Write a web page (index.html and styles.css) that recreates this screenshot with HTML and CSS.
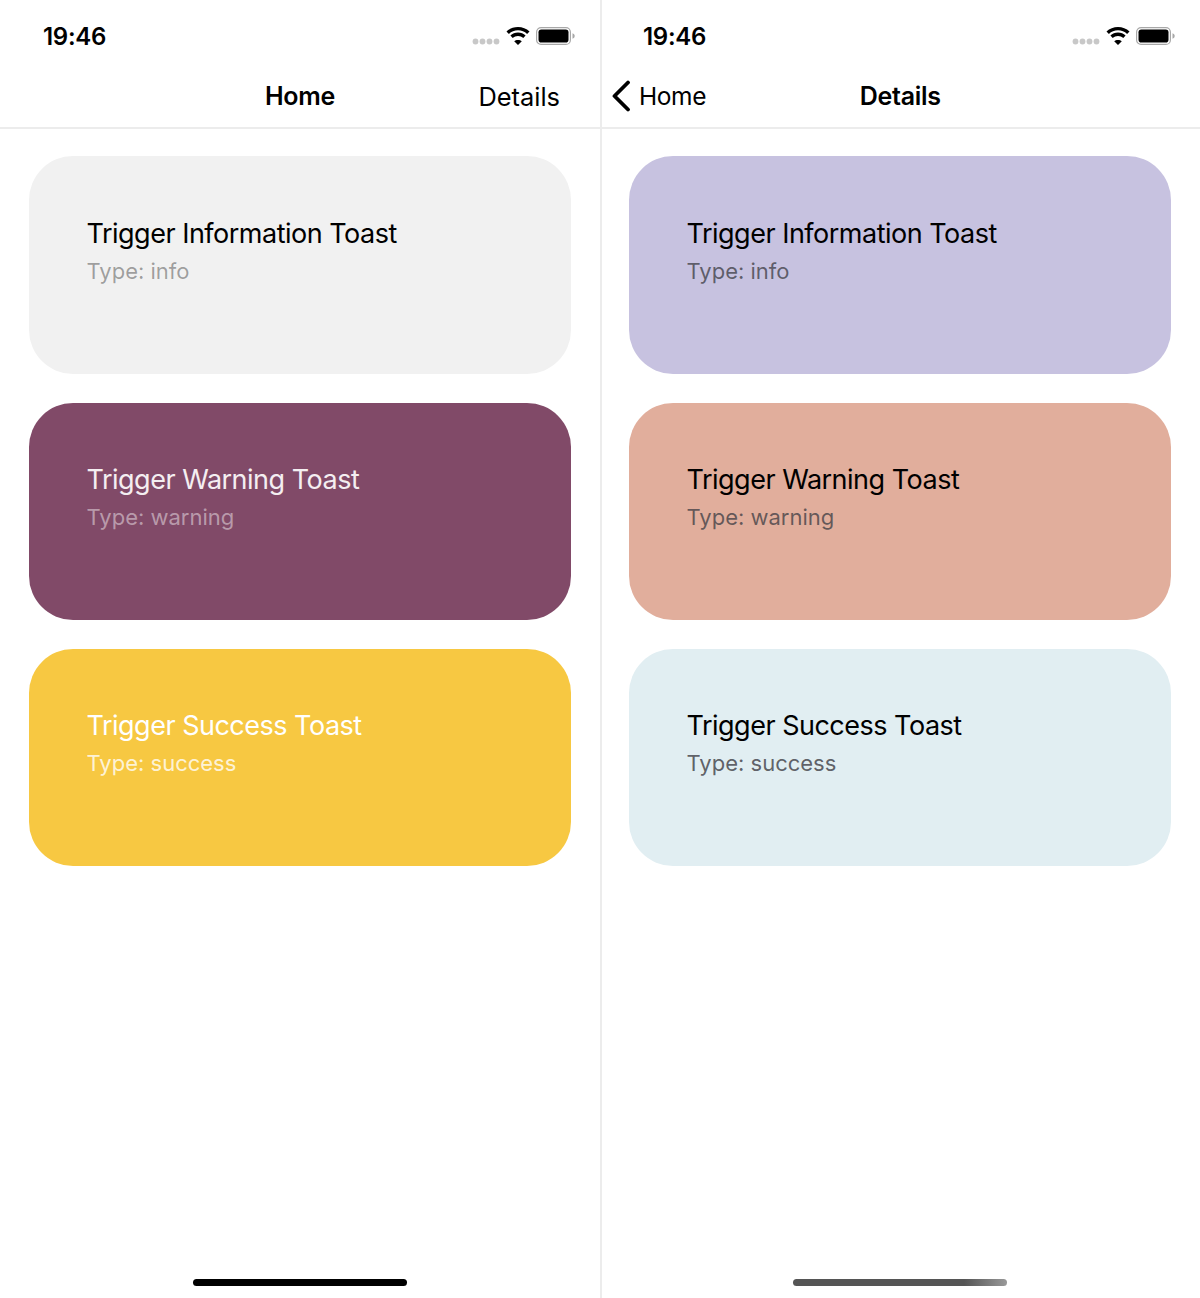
FILE: index.html
```html
<!DOCTYPE html>
<html lang="en">
<head>
<meta charset="utf-8">
<title>Toast demo</title>
<link rel="stylesheet" href="styles.css">
</head>
<body>
<div class="screens">
  <section class="screen">
    <div class="status">
      <span class="time">19:46</span>
      <div class="status-icons">
        <svg class="signal" width="28" height="7" viewBox="0 0 28 7"><g fill="#c8c8c8"><circle cx="3.5" cy="3.5" r="2.9"/><circle cx="10.5" cy="3.5" r="2.9"/><circle cx="17.5" cy="3.5" r="2.9"/><circle cx="24.5" cy="3.500" r="2.9"/></g></svg>
        <svg class="wifi" width="24" height="18" viewBox="0 0 24 18"><path d="M12 3.300c3.500 0 6.700 1.400 9.100 3.600L23.500 4.400C20.500 1.700 16.400 0 12 0S3.500 1.700.5 4.400l2.400 2.500C5.300 4.700 8.500 3.300 12 3.300zM12 8.900c2 0 3.900.8 5.300 2l2.300-2.400C17.600 6.600 14.900 5.500 12 5.500S6.400 6.600 4.400 8.500l2.300 2.400C8.100 9.700 10 8.900 12 8.900zM12 12.900c-1.500 0-2.800.5-3.800 1.400L12 18l3.800-3.700c-1-.9-2.300-1.400-3.800-1.400z" fill="#000"/></svg>
        <svg class="battery" width="39" height="18" viewBox="0 0 39 18"><rect x=".6" y=".6" width="33.800" height="16.800" rx="4.500" fill="none" stroke="#a8a8a8" stroke-width="1.200"/><rect x="2.500" y="2.500" width="30" height="13" rx="2.800" fill="#000"/><path d="M36.500 6.200c1.300.4 2.200 1.500 2.200 2.800s-.9 2.400-2.200 2.800z" fill="#a8a8a8"/></svg>
      </div>
    </div>
    <nav class="nav">
      <span class="nav-title">Home</span>
      <span class="nav-action">Details</span>
    </nav>
    <div class="cards">
      <div class="card card-grey"><div class="card-title">Trigger Information Toast</div><div class="card-type">Type: info</div></div>
      <div class="card card-plum"><div class="card-title">Trigger Warning Toast</div><div class="card-type">Type: warning</div></div>
      <div class="card card-yellow"><div class="card-title">Trigger Success Toast</div><div class="card-type">Type: success</div></div>
    </div>
    <div class="home-bar"></div>
  </section>
  <section class="screen screen-details">
    <div class="status">
      <span class="time">19:46</span>
      <div class="status-icons">
        <svg class="signal" width="28" height="7" viewBox="0 0 28 7"><g fill="#c8c8c8"><circle cx="3.5" cy="3.5" r="2.9"/><circle cx="10.5" cy="3.5" r="2.9"/><circle cx="17.5" cy="3.5" r="2.9"/><circle cx="24.5" cy="3.500" r="2.9"/></g></svg>
        <svg class="wifi" width="24" height="18" viewBox="0 0 24 18"><path d="M12 3.300c3.500 0 6.700 1.400 9.100 3.600L23.500 4.400C20.500 1.700 16.400 0 12 0S3.500 1.700.5 4.400l2.400 2.500C5.300 4.700 8.500 3.300 12 3.300zM12 8.900c2 0 3.900.8 5.300 2l2.300-2.400C17.600 6.600 14.900 5.500 12 5.500S6.400 6.600 4.400 8.500l2.300 2.400C8.100 9.700 10 8.900 12 8.900zM12 12.900c-1.500 0-2.800.5-3.800 1.400L12 18l3.800-3.700c-1-.9-2.300-1.400-3.800-1.400z" fill="#000"/></svg>
        <svg class="battery" width="39" height="18" viewBox="0 0 39 18"><rect x=".6" y=".6" width="33.800" height="16.800" rx="4.500" fill="none" stroke="#a8a8a8" stroke-width="1.200"/><rect x="2.500" y="2.500" width="30" height="13" rx="2.800" fill="#000"/><path d="M36.500 6.200c1.300.4 2.200 1.500 2.200 2.800s-.9 2.400-2.200 2.800z" fill="#a8a8a8"/></svg>
      </div>
    </div>
    <nav class="nav">
      <span class="nav-back">
        <svg class="chevron" width="20" height="32" viewBox="0 0 20 32"><path d="M17 2.500 3.500 16 17 29.500" fill="none" stroke="#000" stroke-width="3.800" stroke-linecap="round" stroke-linejoin="round"/></svg>
        <span class="back-label">Home</span>
      </span>
      <span class="nav-title">Details</span>
    </nav>
    <div class="cards">
      <div class="card card-lilac"><div class="card-title">Trigger Information Toast</div><div class="card-type">Type: info</div></div>
      <div class="card card-salmon"><div class="card-title">Trigger Warning Toast</div><div class="card-type">Type: warning</div></div>
      <div class="card card-ice"><div class="card-title">Trigger Success Toast</div><div class="card-type">Type: success</div></div>
    </div>
    <div class="home-bar home-bar-fade"></div>
  </section>
</div>
</body>
</html>
```
FILE: styles.css
```css
* { box-sizing: border-box; }
html, body { margin: 0; padding: 0; background: #fff; }
body { font-family: Inter, "Liberation Sans", sans-serif; color: #000; }
.screens { display: grid; grid-template-columns: 600px 600px; height: 1298px; overflow: hidden; }
.screen { display: flex; flex-direction: column; height: 1298px; }
.screen-details { box-shadow: inset 2px 0 0 #ececec; }
.status { height: 72px; display: flex; justify-content: space-between; align-items: flex-start; padding: 23px 25px 0 43px; }
.time { font-size: 24px; line-height: 28px; font-weight: 600; letter-spacing: -.3px; }
.status-icons { display: flex; align-items: flex-start; padding-top: 4px; }
.signal { margin-top: 11px; margin-right: 6px; }
.wifi { margin-right: 6px; }
.nav { height: 57px; display: grid; grid-template-columns: 1fr auto 1fr; align-items: center; border-bottom: 2px solid #ececec; padding: 0 40px 7px 11px; font-size: 25.400px; }
.nav-title { grid-column: 2; font-weight: 600; font-size: 25px; letter-spacing: -.25px; margin-left: 29px; }
.nav-action { grid-column: 3; justify-self: end; font-weight: 400; }
.nav-back { grid-column: 1; grid-row: 1; display: flex; align-items: center; gap: 8px; font-weight: 400; }
.back-label { font-size: 24.500px; letter-spacing: -.4px; }
.screen-details .nav-title { grid-column: 2; grid-row: 1; margin-left: 29.500px; }
.cards { display: flex; flex-direction: column; gap: 29.200px; padding: 27.400px 29px 0 29px; flex: 1; }
.card { height: 217.200px; flex: none; border-radius: 44px; padding: 58.200px 58px 0 57.500px; }
.card-title { font-size: 27px; line-height: 38px; font-weight: 400; letter-spacing: -.5px; }
.card-type { font-size: 22px; line-height: 37px; font-weight: 400; color: rgba(0,0,0,.36); }
.card-grey { background: #f1f1f1; }
.card-plum { background: #814a68; color: #f4eef1; }
.card-plum .card-type { color: rgba(255,255,255,.45); }
.card-yellow { background: #f7c842; color: #fff; }
.card-yellow .card-type { color: rgba(255,255,255,.8); }
.card-lilac { background: #c7c2e0; }
.card-lilac .card-type { color: rgba(60,60,67,.75); }
.card-salmon { background: #e1ae9c; }
.card-salmon .card-type { color: rgba(60,60,67,.75); }
.card-ice { background: #e1eef2; }
.card-ice .card-type { color: rgba(60,60,67,.8); }
.home-bar { width: 214px; height: 7px; border-radius: 4px; background: #000; margin: 0 auto 12px; }
.home-bar-fade { background: linear-gradient(90deg, #555 0%, #555 80%, #999 100%); }
```
